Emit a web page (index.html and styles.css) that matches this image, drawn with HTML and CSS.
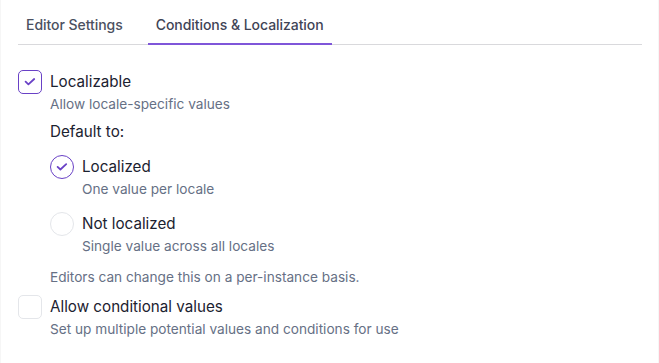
FILE: index.html
```html
<!DOCTYPE html>
<html lang="en">
<head>
    <meta charset="UTF-8">
    <meta name="viewport" content="width=device-width, initial-scale=1.0">
    <title>Field settings</title>
    <link rel="stylesheet" href="styles.css">
</head>
<body>
    <div class="panel">
        <div class="tabs">
            <div class="tab">Editor Settings</div>
            <div class="tab tab-active">Conditions &amp; Localization</div>
        </div>

        <div class="content">
            <div class="option">
                <span class="checkbox checked">
                    <svg viewBox="0 0 24 24" width="24" height="24"><polyline points="7.6,11.7 10.4,14.3 16.2,9" /></svg>
                </span>
                <div class="option-text">
                    <div class="option-label">Localizable</div>
                    <div class="option-desc">Allow locale-specific values</div>
                </div>
            </div>

            <div class="nested">
                <div class="nested-title">Default to:</div>

                <div class="option radio-option">
                    <span class="radio checked">
                        <svg viewBox="0 0 24 24" width="24" height="24"><polyline points="7.6,11.9 10.4,14.5 16.2,9.2" /></svg>
                    </span>
                    <div class="option-text">
                        <div class="option-label">Localized</div>
                        <div class="option-desc">One value per locale</div>
                    </div>
                </div>

                <div class="option radio-option">
                    <span class="radio"></span>
                    <div class="option-text">
                        <div class="option-label">Not localized</div>
                        <div class="option-desc">Single value across all locales</div>
                    </div>
                </div>

                <div class="note">Editors can change this on a per-instance basis.</div>
            </div>

            <div class="option last-option">
                <span class="checkbox"></span>
                <div class="option-text">
                    <div class="option-label">Allow conditional values</div>
                    <div class="option-desc">Set up multiple potential values and conditions for use</div>
                </div>
            </div>
        </div>
    </div>
</body>
</html>
```

FILE: styles.css
```css
body {
    font-family: Inter, 'Noto Sans', Arial, sans-serif;
    color: #1f2937;
    background-color: #fff;
    margin: 0;
}

.panel {
    height: 363px;
    box-sizing: border-box;
    border-left: 1px solid #f6f6f6;
    border-right: 1px solid #f6f6f6;
    padding: 0 16px 0 17px;
}

.tabs {
    display: flex;
    gap: 17px;
    height: 45px;
    box-sizing: border-box;
    border-bottom: 1px solid #d9d9dc;
    padding-top: 15px;
}

.tab {
    padding: 0 8px;
    font-size: 14px;
    font-weight: 500;
    line-height: 20px;
    letter-spacing: -0.05px;
    color: #4b5161;
    height: 30px;
    box-sizing: border-box;
}

.tab-active {
    border-bottom: 2px solid #7f56d9;
    height: 30px;
    margin-bottom: -1px;
    color: #3f4456;
}

.content {
    padding-top: 25px;
}

.option {
    display: flex;
    gap: 8px;
}

.option-label {
    font-size: 15.2px;
    line-height: 24px;
    color: #1c2230;
}

.option-desc {
    font-size: 13.65px;
    line-height: 20px;
    color: #667085;
}

.checkbox, .radio {
    flex: none;
    width: 24px;
    height: 24px;
    box-sizing: border-box;
    border: 1px solid #e4e6ea;
    border-radius: 5px;
    position: relative;
}

.radio {
    border-radius: 50%;
}

.checked {
    border-color: #6941c6;
}

.checkbox svg, .radio svg {
    position: absolute;
    top: -1px;
    left: -1px;
}

svg polyline {
    fill: none;
    stroke: #6941c6;
    stroke-width: 1.8;
    stroke-linecap: round;
    stroke-linejoin: round;
}

.nested {
    padding-left: 32px;
    padding-top: 6px;
}

.nested-title {
    font-size: 15.2px;
    line-height: 24px;
    color: #1c2230;
    margin-bottom: 11px;
}

.radio-option {
    gap: 8px;
    margin-bottom: 13px;
}

.note {
    font-size: 13.65px;
    line-height: 20px;
    color: #667085;
    margin-top: -2px;
}

.last-option {
    margin-top: 8px;
}
```
